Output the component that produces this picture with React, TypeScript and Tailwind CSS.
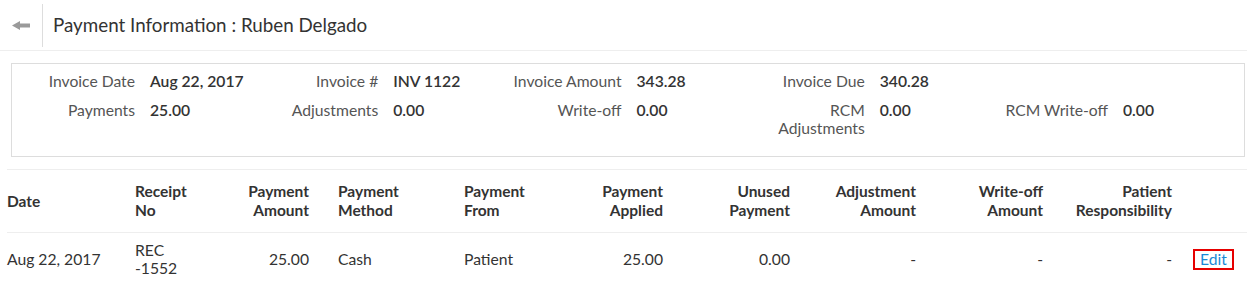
const summary = [
  [
    { label: "Invoice Date", value: "Aug 22, 2017" },
    { label: "Invoice #", value: "INV 1122" },
    { label: "Invoice Amount", value: "343.28" },
    { label: "Invoice Due", value: "340.28" },
  ],
  [
    { label: "Payments", value: "25.00" },
    { label: "Adjustments", value: "0.00" },
    { label: "Write-off", value: "0.00" },
    { label: "RCM Adjustments", value: "0.00" },
    { label: "RCM Write-off", value: "0.00" },
  ],
]

const columns = [
  { title: ["Date"], align: "left", cls: "" },
  { title: ["Receipt", "No"], align: "left", cls: "" },
  { title: ["Payment", "Amount"], align: "right", cls: "" },
  { title: ["Payment", "Method"], align: "left", cls: "pl-[29px]" },
  { title: ["Payment", "From"], align: "left", cls: "" },
  { title: ["Payment", "Applied"], align: "right", cls: "" },
  { title: ["Unused", "Payment"], align: "right", cls: "" },
  { title: ["Adjustment", "Amount"], align: "right", cls: "" },
  { title: ["Write-off", "Amount"], align: "right", cls: "" },
  { title: ["Patient", "Responsibility"], align: "right", cls: "" },
]

const row = ["Aug 22, 2017", "REC\n-1552", "25.00", "Cash", "Patient", "25.00", "0.00", "-", "-", "-"]

const gridCols =
  "grid grid-cols-[128px_80px_94px_155px_96px_103px_127px_126px_127px_129px_1fr]"

function BackArrow() {
  return (
    <svg width="18" height="9" viewBox="0 0 18 9" fill="#9a9a9a">
      <path d="M0 4.5 L8 0 L8 2.5 L18 2.5 L18 6.5 L8 6.5 L8 9 Z" />
    </svg>
  )
}

export default function App() {
  return (
    <div className="w-[1247px] h-[287px] bg-white overflow-hidden font-['Lato','Open_Sans',sans-serif] text-[#333]">
      <header className="h-[51px] flex items-center border-b border-[#eeeeee]">
        <div className="w-[43px] h-[43px] flex items-center justify-center border-r border-[#dddddd] pr-[1px]">
          <BackArrow />
        </div>
        <h1 className="ml-[10px] text-[18.8px] text-[#333]">Payment Information : Ruben Delgado</h1>
      </header>

      <div className="pl-[7px]">
        <div className="mt-[12px] ml-[4px] mr-[2px] h-[94px] border border-[#dddddd] pt-[5px]">
          {summary.map((items, i) => (
            <div key={i} className="grid grid-cols-[repeat(5,243.25px)] h-[29px]">
              {items.map((it) => (
                <div key={it.label} className="flex items-start pt-[3px]">
                  <div className="w-[123px] shrink-0 text-right text-[15.7px] leading-[18px] text-[#555]">
                    {it.label === "RCM Adjustments" ? (
                      <>
                        RCM
                        <br />
                        Adjustments
                      </>
                    ) : (
                      it.label
                    )}
                  </div>
                  <div className="ml-[15px] text-[15.7px] leading-[18px] font-semibold text-[#333]">{it.value}</div>
                </div>
              ))}
            </div>
          ))}
        </div>

        <div className="mt-[12px] border-t border-[#eeeeee]">
          <div className={`${gridCols} h-[63px] items-center border-b border-[#eeeeee]`}>
            {columns.map((c, i) => (
              <div
                key={i}
                className={`${c.align === "right" ? "text-right" : "text-left"} ${c.cls} text-[15.5px] leading-[19px] font-bold text-[#333]`}
              >
                {c.title.map((t) => (
                  <div key={t}>{t}</div>
                ))}
              </div>
            ))}
            <div />
          </div>

          <div className={`${gridCols} h-[53px] pb-[2px] items-center`}>
            {row.map((v, i) => (
              <div
                key={i}
                className={`${columns[i].align === "right" ? "text-right" : "text-left"} ${columns[i].cls} text-[15.7px] leading-[18px] text-[#333] whitespace-pre-line`}
              >
                {v}
              </div>
            ))}
            <div className="pl-[21px]">
              <a className="inline-block border-2 border-[#e60000] px-[5px] leading-[17px] text-[15.7px] text-[#1a88d6]">
                Edit
              </a>
            </div>
          </div>
        </div>
      </div>
    </div>
  )
}
